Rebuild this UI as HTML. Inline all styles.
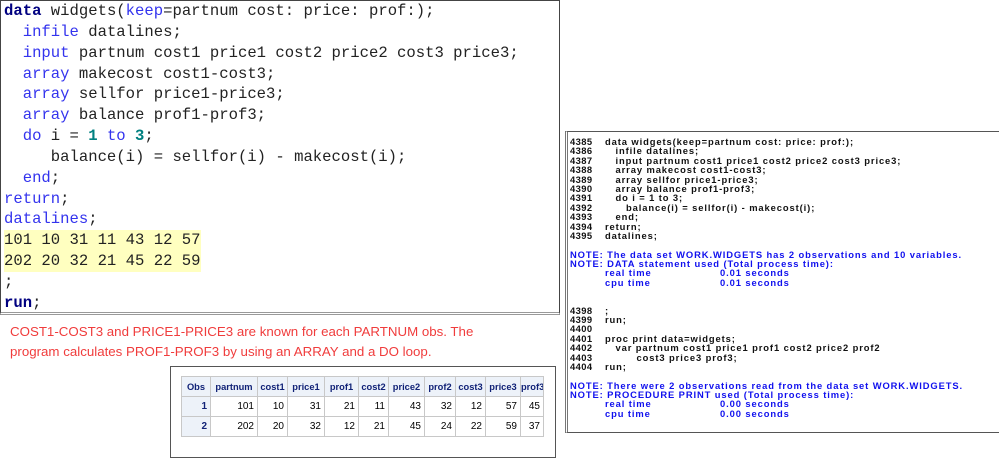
<!DOCTYPE html>
<html><head><meta charset="utf-8"><style>
body{margin:0;width:999px;height:450px;background:#fff;position:relative;overflow:hidden;font-family:"Liberation Sans",sans-serif}
.code{position:absolute;left:0;top:0;width:558px;height:311px;border:1px solid #444;border-bottom:3px double #999;}
.code pre{margin:0;position:absolute;left:3px;top:0;font-family:"Liberation Mono",monospace;font-size:15.6px;line-height:20.85px;color:#222}
.k{color:#3333ee}.n{color:#008080;font-weight:bold}.b{color:#000080;font-weight:bold}
.hl{position:absolute;left:3px;top:229px;width:197px;height:42px;background:#ffffc0}
.red{position:absolute;left:10px;top:322px;color:#f03c3c;font-size:13.3px;line-height:20px}
.tb{position:absolute;left:170px;top:366px;width:384px;height:90px;border:1px solid #555;}
table{position:absolute;left:10px;top:9px;border-collapse:collapse;table-layout:fixed;width:362px;font-size:10px;font-family:"Liberation Sans",sans-serif}
td,th{border:1px solid #c8c8c8;padding:0 3px;height:19px;text-align:right;color:#000;overflow:hidden;white-space:nowrap}
th{background:#edf2f9;color:#112277;font-weight:bold;text-align:center;padding:0;font-size:9.3px}
td.o{background:#edf2f9;color:#112277;font-weight:bold}
.log{position:absolute;left:565px;top:131px;width:432px;height:300px;border:1px solid #555;border-left:3px double #777}
.l{position:absolute;left:2px;height:10px;font-family:"Liberation Sans",sans-serif;font-weight:bold;font-size:9.4px;line-height:9.35px;letter-spacing:0.9px;color:#111;white-space:pre}
.l i{font-style:normal;display:inline-block;width:35px;letter-spacing:0.4px}
.l u{text-decoration:none;display:inline-block;width:115px}
.nb{color:#1010ee}
</style></head><body>
<div class="code"><div class="hl"></div><pre><span class="b">data</span> widgets(<span class="k">keep</span>=partnum cost: price: prof:);
  <span class="k">infile</span> datalines;
  <span class="k">input</span> partnum cost1 price1 cost2 price2 cost3 price3;
  <span class="k">array</span> makecost cost1-cost3;
  <span class="k">array</span> sellfor price1-price3;
  <span class="k">array</span> balance prof1-prof3;
  <span class="k">do</span> i = <span class="n">1</span> <span class="k">to</span> <span class="n">3</span>;
     balance(i) = sellfor(i) - makecost(i);
  <span class="k">end</span>;
<span class="k">return</span>;
<span class="k">datalines</span>;
101 10 31 11 43 12 57
202 20 32 21 45 22 59
;
<span class="b">run</span>;</pre></div>
<div class="red">COST1-COST3 and PRICE1-PRICE3 are known for each PARTNUM obs. The<br>program calculates PROF1-PROF3 by using an ARRAY and a DO loop.</div>
<div class="tb"><table>
<colgroup><col style="width:29px"><col style="width:47px"><col style="width:30px"><col style="width:37px"><col style="width:34px"><col style="width:30px"><col style="width:36px"><col style="width:31px"><col style="width:30px"><col style="width:35px"><col style="width:23px"></colgroup>
<tr><th>Obs</th><th>partnum</th><th>cost1</th><th>price1</th><th>prof1</th><th>cost2</th><th>price2</th><th>prof2</th><th>cost3</th><th>price3</th><th>prof3</th></tr>
<tr><td class="o">1</td><td>101</td><td>10</td><td>31</td><td>21</td><td>11</td><td>43</td><td>32</td><td>12</td><td>57</td><td>45</td></tr>
<tr><td class="o">2</td><td>202</td><td>20</td><td>32</td><td>12</td><td>21</td><td>45</td><td>24</td><td>22</td><td>59</td><td>37</td></tr>
</table></div>
<div class="log">
<div class="l" style="top:5px"><i>4385</i>data widgets(keep=partnum cost: price: prof:);</div>
<div class="l" style="top:14.4px"><i>4386</i>   infile datalines;</div>
<div class="l" style="top:23.8px"><i>4387</i>   input partnum cost1 price1 cost2 price2 cost3 price3;</div>
<div class="l" style="top:33.2px"><i>4388</i>   array makecost cost1-cost3;</div>
<div class="l" style="top:42.6px"><i>4389</i>   array sellfor price1-price3;</div>
<div class="l" style="top:52px"><i>4390</i>   array balance prof1-prof3;</div>
<div class="l" style="top:61.4px"><i>4391</i>   do i = 1 to 3;</div>
<div class="l" style="top:70.8px"><i>4392</i>      balance(i) = sellfor(i) - makecost(i);</div>
<div class="l" style="top:80.2px"><i>4393</i>   end;</div>
<div class="l" style="top:89.6px"><i>4394</i>return;</div>
<div class="l" style="top:99px"><i>4395</i>datalines;</div>
<div class="l nb" style="top:117.5px">NOTE: The data set WORK.WIDGETS has 2 observations and 10 variables.</div>
<div class="l nb" style="top:126.9px">NOTE: DATA statement used (Total process time):</div>
<div class="l nb" style="top:136.3px"><i></i><u>real time</u>0.01 seconds</div>
<div class="l nb" style="top:145.7px"><i></i><u>cpu time</u>0.01 seconds</div>
<div class="l" style="top:173.5px"><i>4398</i>;</div>
<div class="l" style="top:182.9px"><i>4399</i>run;</div>
<div class="l" style="top:192.3px"><i>4400</i></div>
<div class="l" style="top:201.7px"><i>4401</i>proc print data=widgets;</div>
<div class="l" style="top:211.1px"><i>4402</i>   var partnum cost1 price1 prof1 cost2 price2 prof2</div>
<div class="l" style="top:220.5px"><i>4403</i>         cost3 price3 prof3;</div>
<div class="l" style="top:229.9px"><i>4404</i>run;</div>
<div class="l nb" style="top:248.5px">NOTE: There were 2 observations read from the data set WORK.WIDGETS.</div>
<div class="l nb" style="top:257.9px">NOTE: PROCEDURE PRINT used (Total process time):</div>
<div class="l nb" style="top:267.3px"><i></i><u>real time</u>0.00 seconds</div>
<div class="l nb" style="top:276.7px"><i></i><u>cpu time</u>0.00 seconds</div>
</div>
</body></html>
